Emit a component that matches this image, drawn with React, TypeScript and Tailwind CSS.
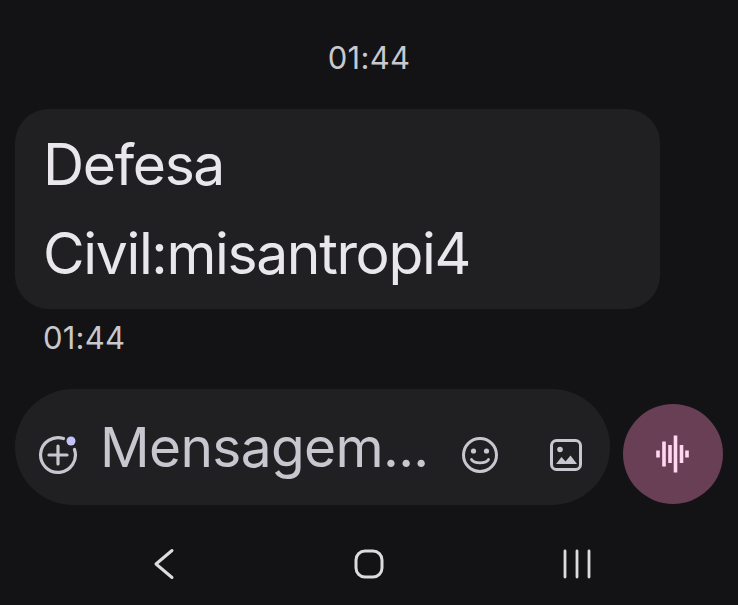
const font = "font-['Inter','Liberation_Sans',sans-serif]";

function AddIcon() {
  return (
    <svg width="40" height="50" viewBox="0 0 40 50" fill="none" className="mt-[6px] shrink-0">
      <path d="M36.5 24.5A17.4 17.4 0 1 1 25.5 13.5" stroke="#c8c6ce" strokeWidth="3.2" strokeLinecap="round" />
      <path d="M20 21V39M11 30H29" stroke="#c8c6ce" strokeWidth="3.2" strokeLinecap="round" />
      <circle cx="33" cy="16" r="4.5" fill="#c4c2f7" />
    </svg>
  );
}

function SmileIcon() {
  return (
    <svg width="38" height="38" viewBox="0 0 38 38" fill="none" className="shrink-0">
      <circle cx="19" cy="19" r="16.5" stroke="#c8c6ce" strokeWidth="3" />
      <circle cx="12.5" cy="15" r="2.6" fill="#c8c6ce" />
      <circle cx="25.5" cy="15" r="2.6" fill="#c8c6ce" />
      <path d="M10.5 23.5C13 28 25 28 27.5 23.5" stroke="#c8c6ce" strokeWidth="2.8" strokeLinecap="round" />
    </svg>
  );
}

function PictureIcon() {
  return (
    <svg width="34" height="34" viewBox="0 0 34 34" fill="none" className="shrink-0">
      <rect x="2.5" y="2.5" width="29" height="29" rx="5" stroke="#c8c6ce" strokeWidth="3" />
      <circle cx="11" cy="11.5" r="2.8" fill="#c8c6ce" />
      <path d="M7 26L12.5 19L16.5 23.5L21.5 17.5L28 26Z" fill="#c8c6ce" />
    </svg>
  );
}

function WaveIcon() {
  return (
    <svg width="34" height="38" viewBox="0 0 34 38" fill="none" className="-ml-[1px]">
      <path d="M2 15.5V22.5M8 6.5V31.5M14 10V28M19.5 0.5V37.5M25.5 10V28M31 15.5V22.5" stroke="#ffd8f0" strokeWidth="3.6" />
    </svg>
  );
}

export default function App() {
  return (
    <div className={`flex h-[605px] w-[738px] flex-col overflow-hidden bg-[#131315] ${font}`}>
      <div className="pt-[39px] text-center text-[31px] leading-[37px] tracking-[0.3px] text-[#c9c8cd]">01:44</div>

      <div className="mt-[33px] ml-[15px] flex h-[200px] w-[645px] flex-col justify-center rounded-[34px] bg-[#202023] pl-[28px] text-[57px] leading-[89px] tracking-[-1.35px] text-[#e9e7ec]">
        <div>Defesa</div>
        <div>Civil:misantropi4</div>
      </div>

      <div className="mt-[10px] pl-[43px] text-[31px] leading-[37px] tracking-[0.2px] text-[#c9c8cd]">01:44</div>

      <div className="mt-[33px] flex items-center pl-[15px]">
        <div className="flex h-[116px] w-[595px] items-center rounded-[58px] bg-[#202023] pl-[23px]">
          <AddIcon />
          <span className="ml-[22px] text-[55px] leading-none tracking-[-0.65px] text-[#c8c6ce]">Mensagem...</span>
          <div className="mt-[16px] ml-auto flex items-center gap-[50px] pr-[27px]">
            <SmileIcon />
            <PictureIcon />
          </div>
        </div>
        <div className="ml-[13px] mt-[14px] flex size-[100px] items-center justify-center rounded-full bg-[#683f55]">
          <WaveIcon />
        </div>
      </div>

      <div className="mt-[43px] flex items-center pl-[150px]">
        <svg width="26" height="32" viewBox="0 0 26 32" fill="none">
          <path d="M22 2.5L6 16L22 29.5" stroke="#dcdcdf" strokeWidth="3" strokeLinecap="round" strokeLinejoin="round" />
        </svg>
        <svg width="32" height="32" viewBox="0 0 32 32" fill="none" className="ml-[177px]">
          <rect x="3" y="3" width="26" height="26" rx="9" stroke="#dcdcdf" strokeWidth="3" />
        </svg>
        <svg width="32" height="32" viewBox="0 0 32 32" fill="none" className="ml-[176px]">
          <path d="M4 3V29M16 3V29M28 3V29" stroke="#dcdcdf" strokeWidth="2.8" strokeLinecap="round" />
        </svg>
      </div>
    </div>
  );
}
